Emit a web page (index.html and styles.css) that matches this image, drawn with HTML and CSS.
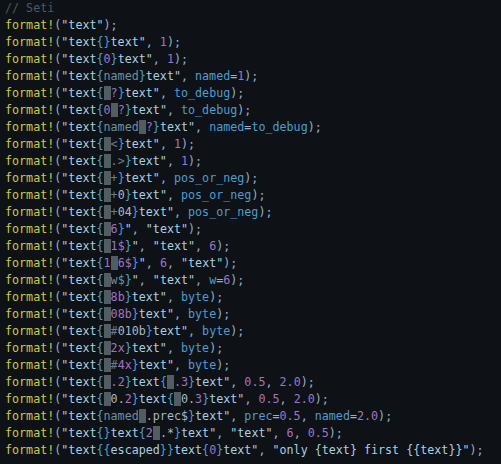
FILE: index.html
```html
<!DOCTYPE html>
<html>
<head>
<meta charset="utf-8">
<link rel="stylesheet" href="styles.css">
</head>
<body>
<pre class="code"><span class="c">// Seti</span>
<span class="f">format!</span><span class="p">(</span><span class="s">"text"</span><span class="p">);</span>
<span class="f">format!</span><span class="p">(</span><span class="s">"text</span><span class="b">{}</span><span class="s">text"</span><span class="p">, </span><span class="n">1</span><span class="p">);</span>
<span class="f">format!</span><span class="p">(</span><span class="s">"text</span><span class="b">{</span><span class="n">0</span><span class="b">}</span><span class="s">text"</span><span class="p">, </span><span class="n">1</span><span class="p">);</span>
<span class="f">format!</span><span class="p">(</span><span class="s">"text</span><span class="b">{</span><span class="a">named</span><span class="b">}</span><span class="s">text"</span><span class="p">, </span><span class="v">named</span><span class="p">=</span><span class="n">1</span><span class="p">);</span>
<span class="f">format!</span><span class="p">(</span><span class="s">"text</span><span class="b">{</span><span class="m">:</span><span class="k">?</span><span class="b">}</span><span class="s">text"</span><span class="p">, </span><span class="v">to_debug</span><span class="p">);</span>
<span class="f">format!</span><span class="p">(</span><span class="s">"text</span><span class="b">{</span><span class="n">0</span><span class="m">:</span><span class="k">?</span><span class="b">}</span><span class="s">text"</span><span class="p">, </span><span class="v">to_debug</span><span class="p">);</span>
<span class="f">format!</span><span class="p">(</span><span class="s">"text</span><span class="b">{</span><span class="a">named</span><span class="m">:</span><span class="k">?</span><span class="b">}</span><span class="s">text"</span><span class="p">, </span><span class="v">named</span><span class="p">=</span><span class="v">to_debug</span><span class="p">);</span>
<span class="f">format!</span><span class="p">(</span><span class="s">"text</span><span class="b">{</span><span class="m">:</span><span class="g">&lt;</span><span class="b">}</span><span class="s">text"</span><span class="p">, </span><span class="n">1</span><span class="p">);</span>
<span class="f">format!</span><span class="p">(</span><span class="s">"text</span><span class="b">{</span><span class="m">:</span><span class="g">.&gt;</span><span class="b">}</span><span class="s">text"</span><span class="p">, </span><span class="n">1</span><span class="p">);</span>
<span class="f">format!</span><span class="p">(</span><span class="s">"text</span><span class="b">{</span><span class="m">:</span><span class="g">+</span><span class="b">}</span><span class="s">text"</span><span class="p">, </span><span class="v">pos_or_neg</span><span class="p">);</span>
<span class="f">format!</span><span class="p">(</span><span class="s">"text</span><span class="b">{</span><span class="m">:</span><span class="g">+</span><span class="l">0</span><span class="b">}</span><span class="s">text"</span><span class="p">, </span><span class="v">pos_or_neg</span><span class="p">);</span>
<span class="f">format!</span><span class="p">(</span><span class="s">"text</span><span class="b">{</span><span class="m">:</span><span class="g">+</span><span class="l">04</span><span class="b">}</span><span class="s">text"</span><span class="p">, </span><span class="v">pos_or_neg</span><span class="p">);</span>
<span class="f">format!</span><span class="p">(</span><span class="s">"text</span><span class="b">{</span><span class="m">:</span><span class="n">6</span><span class="b">}</span><span class="s">"</span><span class="p">, </span><span class="s">"text"</span><span class="p">);</span>
<span class="f">format!</span><span class="p">(</span><span class="s">"text</span><span class="b">{</span><span class="m">:</span><span class="n">1$</span><span class="b">}</span><span class="s">"</span><span class="p">, </span><span class="s">"text"</span><span class="p">, </span><span class="n">6</span><span class="p">);</span>
<span class="f">format!</span><span class="p">(</span><span class="s">"text</span><span class="b">{</span><span class="n">1</span><span class="m">:</span><span class="n">6$</span><span class="b">}</span><span class="s">"</span><span class="p">, </span><span class="n">6</span><span class="p">, </span><span class="s">"text"</span><span class="p">);</span>
<span class="f">format!</span><span class="p">(</span><span class="s">"text</span><span class="b">{</span><span class="m">:</span><span class="a">w$</span><span class="b">}</span><span class="s">"</span><span class="p">, </span><span class="s">"text"</span><span class="p">, </span><span class="v">w</span><span class="p">=</span><span class="n">6</span><span class="p">);</span>
<span class="f">format!</span><span class="p">(</span><span class="s">"text</span><span class="b">{</span><span class="m">:</span><span class="n">8b</span><span class="b">}</span><span class="s">text"</span><span class="p">, </span><span class="v">byte</span><span class="p">);</span>
<span class="f">format!</span><span class="p">(</span><span class="s">"text</span><span class="b">{</span><span class="m">:</span><span class="n">08b</span><span class="b">}</span><span class="s">text"</span><span class="p">, </span><span class="v">byte</span><span class="p">);</span>
<span class="f">format!</span><span class="p">(</span><span class="s">"text</span><span class="b">{</span><span class="m">:</span><span class="g">#</span><span class="l">010b</span><span class="b">}</span><span class="s">text"</span><span class="p">, </span><span class="v">byte</span><span class="p">);</span>
<span class="f">format!</span><span class="p">(</span><span class="s">"text</span><span class="b">{</span><span class="m">:</span><span class="n">2x</span><span class="b">}</span><span class="s">text"</span><span class="p">, </span><span class="v">byte</span><span class="p">);</span>
<span class="f">format!</span><span class="p">(</span><span class="s">"text</span><span class="b">{</span><span class="m">:</span><span class="g">#</span><span class="n">4x</span><span class="b">}</span><span class="s">text"</span><span class="p">, </span><span class="v">byte</span><span class="p">);</span>
<span class="f">format!</span><span class="p">(</span><span class="s">"text</span><span class="b">{</span><span class="m">:</span><span class="n">.2</span><span class="b">}</span><span class="s">text</span><span class="b">{</span><span class="m">:</span><span class="n">.3</span><span class="b">}</span><span class="s">text"</span><span class="p">, </span><span class="n">0.5</span><span class="p">, </span><span class="n">2.0</span><span class="p">);</span>
<span class="f">format!</span><span class="p">(</span><span class="s">"text</span><span class="b">{</span><span class="m">:</span><span class="l">0.</span><span class="n">2</span><span class="b">}</span><span class="s">text</span><span class="b">{</span><span class="m">:</span><span class="l">0.</span><span class="n">3</span><span class="b">}</span><span class="s">text"</span><span class="p">, </span><span class="n">0.5</span><span class="p">, </span><span class="n">2.0</span><span class="p">);</span>
<span class="f">format!</span><span class="p">(</span><span class="s">"text</span><span class="b">{</span><span class="a">named</span><span class="m">:</span><span class="l">.prec$</span><span class="b">}</span><span class="s">text"</span><span class="p">, </span><span class="v">prec</span><span class="p">=</span><span class="n">0.5</span><span class="p">, </span><span class="v">named</span><span class="p">=</span><span class="n">2.0</span><span class="p">);</span>
<span class="f">format!</span><span class="p">(</span><span class="s">"text</span><span class="b">{}</span><span class="s">text</span><span class="b">{</span><span class="n">2</span><span class="m">:</span><span class="l">.*</span><span class="b">}</span><span class="s">text"</span><span class="p">, </span><span class="s">"text"</span><span class="p">, </span><span class="n">6</span><span class="p">, </span><span class="n">0.5</span><span class="p">);</span>
<span class="f">format!</span><span class="p">(</span><span class="s">"text</span><span class="b">{{</span><span class="s">escaped</span><span class="b">}}</span><span class="s">text</span><span class="b">{</span><span class="n">0</span><span class="b">}</span><span class="s">text"</span><span class="p">, </span><span class="s">"only {text} first {{text}}"</span><span class="p">);</span></pre>
</body>
</html>
```

FILE: styles.css
```css
html, body {
  margin: 0;
  padding: 0;
  background: #0e1216;
}
.code {
  margin: 0;
  padding: 0 0 0 5px;
  font-family: "DejaVu Sans Mono", monospace;
  font-size: 11.7px;
  line-height: 17px;
  color: #a9c4d4;
  white-space: pre;
}
.c { color: #4b5a62; }
.f { color: #cbcb41; }
.p { color: #8fb3c9; }
.s { color: #a9cfe2; }
.b { color: #4b9fd6; }
.n { color: #a074c4; }
.v { color: #4d9cd0; }
.a { color: #6f8fa3; }
.g { color: #6b7a84; }
.l { color: #a8b8c4; }
.k { color: #a074c4; }
.m {
  background: #525c63;
  color: #525c63;
}
```
